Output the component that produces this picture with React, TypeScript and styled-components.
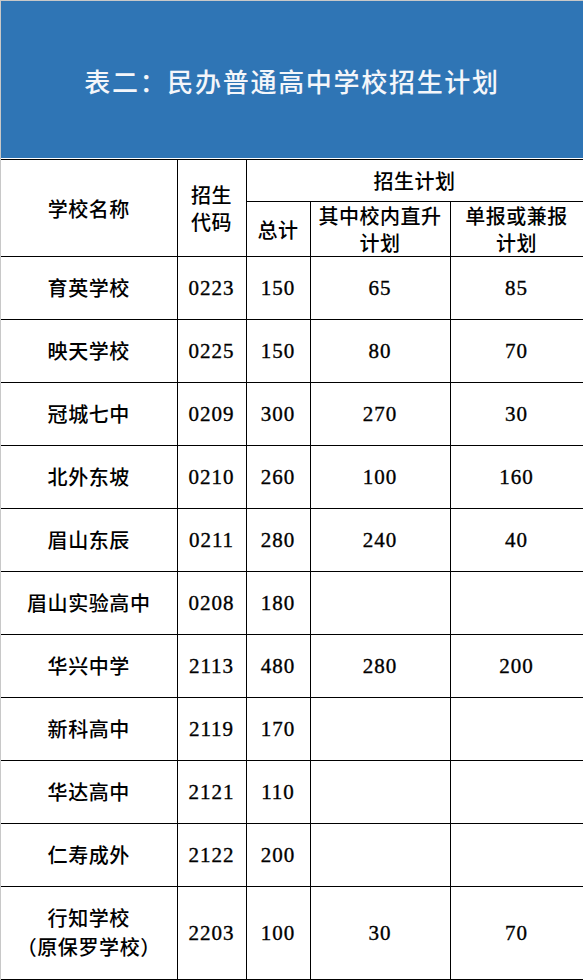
import React from "react";
import styled, { createGlobalStyle } from "styled-components";

const GlobalStyle = createGlobalStyle`
  html, body {
    margin: 0;
    padding: 0;
    background: #fff;
  }
`;

const Page = styled.div`
  width: 582px;
  border-left: 1px solid #c8c8c8;
  border-top: 1px solid #c8c8c8;
  font-family: "Liberation Serif", "Noto Sans CJK SC", serif;
  color: #000;
`;

const Banner = styled.div`
  height: 157px;
  background-color: #2f75b5;
  display: flex;
  align-items: center;
  justify-content: center;
  padding-top: 2px;
  box-sizing: border-box;
`;

const Title = styled.h1`
  margin: 0;
  font-family: "Noto Sans CJK SC", sans-serif;
  font-weight: 500;
  font-size: 26px;
  letter-spacing: 1.7px;
  color: #f4f6fa;
`;

const Table = styled.table`
  width: 582px;
  border-collapse: collapse;
  table-layout: fixed;
  margin-top: 1px;
`;

const Row = styled.tr<{ $h: number }>`
  height: ${({ $h }) => $h}px;
`;

const Cell = styled.td`
  border: 1.5px solid #000;
  padding: 0;
  text-align: center;
  vertical-align: middle;
  font-size: 21px;
  line-height: 28px;
  font-weight: 400;
  letter-spacing: 0.6px;

  &:first-child {
    border-left: none;
  }
`;

const HeadCell = styled(Cell).attrs({ as: "th" })`
  font-family: "Noto Sans CJK SC", sans-serif;
  font-weight: 500;
  font-size: 20px;
  line-height: 27px;
  letter-spacing: 0.5px;
`;

const Name = styled.span`
  font-family: "Noto Sans CJK SC", sans-serif;
  font-weight: 500;
  font-size: 20px;
  line-height: 27px;
`;

const Num = styled.span`
  font-family: "Liberation Serif", serif;
  font-size: 21px;
  letter-spacing: 1px;
  -webkit-text-stroke: 0.35px #000;
`;

type School = {
  name: string;
  sub?: string;
  code: string;
  total: string;
  direct?: string;
  single?: string;
};

const schools: School[] = [
  { name: "育英学校", code: "0223", total: "150", direct: "65", single: "85" },
  { name: "映天学校", code: "0225", total: "150", direct: "80", single: "70" },
  { name: "冠城七中", code: "0209", total: "300", direct: "270", single: "30" },
  { name: "北外东坡", code: "0210", total: "260", direct: "100", single: "160" },
  { name: "眉山东辰", code: "0211", total: "280", direct: "240", single: "40" },
  { name: "眉山实验高中", code: "0208", total: "180" },
  { name: "华兴中学", code: "2113", total: "480", direct: "280", single: "200" },
  { name: "新科高中", code: "2119", total: "170" },
  { name: "华达高中", code: "2121", total: "110" },
  { name: "仁寿成外", code: "2122", total: "200" },
  {
    name: "行知学校",
    sub: "（原保罗学校）",
    code: "2203",
    total: "100",
    direct: "30",
    single: "70",
  },
];

const App = () => {
  return (
    <Page>
      <GlobalStyle />
      <Banner>
        <Title>表二：民办普通高中学校招生计划</Title>
      </Banner>
      <Table>
        <colgroup>
          <col style={{ width: 176 }} />
          <col style={{ width: 69 }} />
          <col style={{ width: 64 }} />
          <col style={{ width: 140 }} />
          <col style={{ width: 133 }} />
        </colgroup>
        <thead>
          <Row $h={42}>
            <HeadCell rowSpan={2}>学校名称</HeadCell>
            <HeadCell rowSpan={2}>
              招生
              <br />
              代码
            </HeadCell>
            <HeadCell colSpan={3}>招生计划</HeadCell>
          </Row>
          <Row $h={55}>
            <HeadCell>总计</HeadCell>
            <HeadCell>
              其中校内直升
              <br />
              计划
            </HeadCell>
            <HeadCell>
              单报或兼报
              <br />
              计划
            </HeadCell>
          </Row>
        </thead>
        <tbody>
          {schools.map((s) => (
            <Row key={s.code} $h={s.sub ? 93 : 63}>
              <Cell>
                <Name>
                  {s.name}
                  {s.sub && (
                    <>
                      <br />
                      {s.sub}
                    </>
                  )}
                </Name>
              </Cell>
              <Cell>
                <Num>{s.code}</Num>
              </Cell>
              <Cell>
                <Num>{s.total}</Num>
              </Cell>
              <Cell>
                <Num>{s.direct}</Num>
              </Cell>
              <Cell>
                <Num>{s.single}</Num>
              </Cell>
            </Row>
          ))}
        </tbody>
      </Table>
    </Page>
  );
};

export default App;
